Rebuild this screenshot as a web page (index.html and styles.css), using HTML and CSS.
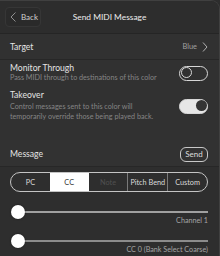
FILE: index.html
```html
<!DOCTYPE html>
<html>
<head>
<meta charset="utf-8">
<link rel="stylesheet" href="styles.css">
</head>
<body>
<div class="sheet">
  <header class="header">
    <button class="back"><svg width="6" height="10" viewBox="0 0 6 10"><path d="M5.5 0.5 L1 5 L5.5 9.5" fill="none" stroke="#9a9a9a" stroke-width="0.9"/></svg><span>Back</span></button>
    <div class="title">Send MIDI Message</div>
  </header>
  <div class="row target">
    <span class="label">Target</span>
    <span class="value">Blue <svg width="6" height="10" viewBox="0 0 6 10"><path d="M1 0.5 L5 5 L1 9.5" fill="none" stroke="#b0b0b0" stroke-width="1"/></svg></span>
  </div>
  <div class="options">
    <div class="row opt">
      <div class="text">
        <div class="label">Monitor Through</div>
        <div class="desc">Pass MIDI through to destinations of this color</div>
      </div>
      <div class="toggle off"><span class="knob"></span></div>
    </div>
    <div class="row opt">
      <div class="text">
        <div class="label">Takeover</div>
        <div class="desc narrow">Control messages sent to this color will temporarily override those being played back.</div>
      </div>
      <div class="toggle on"><span class="knob"></span></div>
    </div>
  </div>
  <div class="row msg">
    <span class="label">Message</span>
    <button class="send">Send</button>
  </div>
  <div class="controls">
    <div class="seg">
      <span>PC</span>
      <span class="sel">CC</span>
      <span class="dis">Note</span>
      <span>Pitch Bend</span>
      <span>Custom</span>
    </div>
    <div class="slider first"><span class="thumb"></span><span class="track"></span></div>
    <div class="cap">Channel 1</div>
    <div class="slider second"><span class="thumb"></span><span class="track"></span></div>
    <div class="cap">CC 0 (Bank Select Coarse)</div>
  </div>
</div>
</body>
</html>
```
FILE: styles.css
```css
* { box-sizing: border-box; }
html, body { margin: 0; padding: 0; background: #2d2d2d; }
body { width: 220px; height: 256px; overflow: hidden; font-family: "Lato", "Open Sans", sans-serif; color: #e2e2e2; }
.sheet { width: 220px; height: 256px; background: #2f2f2f; border-top-right-radius: 9px; border-top: 1px solid #404040; border-right: 1px solid #404040; overflow: hidden; }
.header { position: relative; height: 33px; display: flex; align-items: center; padding-left: 5px; background: #2d2d2d; border-bottom: 1px solid #252525; }
.back { display: flex; align-items: center; gap: 5px; height: 20px; width: 36px; padding: 0 0 0 4px; background: #2a2a2a; border: 1px solid #363636; border-radius: 4px; color: #cfcfcf; font: 8px "Lato", sans-serif; }
.title { position: absolute; left: 0; right: 0; text-align: center; font-size: 8.4px; color: #ececec; pointer-events: none; }
.row { display: flex; align-items: center; justify-content: space-between; padding: 0 11px 0 10px; }
.label { font-size: 8.6px; line-height: 10px; color: #e4e4e4; }
.target { height: 26px; background: #313131; border-bottom: 1px solid #272727; }
.value { display: flex; align-items: center; gap: 5px; font-size: 7.4px; color: #a0a0a0; }
.options { height: 80px; background: #313131; padding-top: 3px; }
.opt { margin-bottom: 7px; }
.opt .text { flex: 1; }
.desc { font-size: 7.2px; color: #858585; line-height: 10px; }
.desc.narrow { max-width: 160px; margin-top: 2px; }
.toggle { width: 29px; height: 15px; border-radius: 8px; border: 1.5px solid #d8d8d8; position: relative; flex: none; }
.toggle .knob { position: absolute; top: 0.5px; width: 11px; height: 11px; border-radius: 50%; }
.toggle.off .knob { left: 0.5px; border: 1.5px solid #d8d8d8; }
.toggle.on { background: #e6e6e6; }
.toggle.on .knob { right: 0.5px; background: #343434; }
.msg { height: 27px; background: #323232; border-bottom: 1px solid #272727; padding-top: 2px; }
.send { font: 8px "Lato", sans-serif; color: #dcdcdc; background: transparent; border: 1px solid #c8c8c8; border-radius: 6px; height: 15px; width: 28px; padding: 0; }
.controls { padding: 5px 11px 0 10px; background: #2e2e2e; height: 100px; }
.seg { display: flex; height: 20px; border: 1px solid #c4c4c4; border-radius: 10px; overflow: hidden; }
.seg span { flex: 1; display: flex; align-items: center; justify-content: center; font-size: 7.3px; color: #dadada; border-left: 1px solid #7a7a7a; white-space: nowrap; }
.seg span:first-child { border-left: 0; }
.seg .sel { background: #fff; color: #333; border-left: 0; }
.seg .sel + span { border-left: 0; }
.seg .dis { color: #505050; }
.slider { position: relative; height: 14px; margin-top: 13px; display: flex; align-items: center; padding-left: 2px; }
.slider.second { margin-top: 8px; }
.track { flex: 1; height: 1.5px; background: #a0a0a0; }
.second .track { height: 2px; background: #8c8c8c; }
.thumb { position: absolute; left: 1px; width: 14px; height: 14px; border-radius: 50%; background: #fff; box-shadow: 0 0 2px rgba(0,0,0,0.6); z-index: 1; }
.cap { text-align: right; font-size: 7.2px; color: #a5a5a5; margin-top: -3px; line-height: 10px; }
```
